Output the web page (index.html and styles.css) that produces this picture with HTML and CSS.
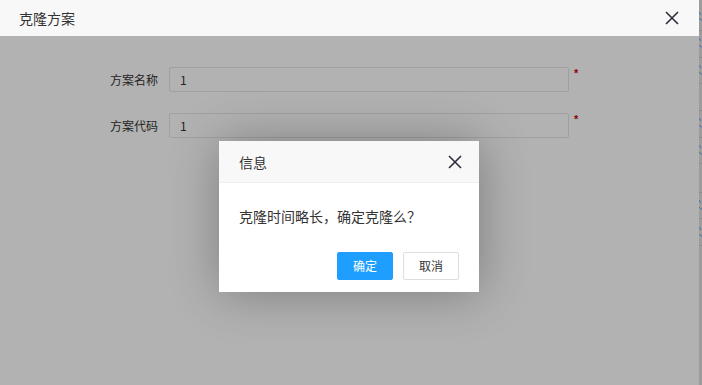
FILE: index.html
```html
<!DOCTYPE html>
<html lang="zh-CN">
<head>
<meta charset="UTF-8">
<title>克隆方案</title>
<link rel="stylesheet" href="styles.css">
</head>
<body>
<div class="layer">
    <div class="layer-title">
        <span>克隆方案</span>
        <svg class="close" width="14" height="14" viewBox="0 0 14 14"><path d="M1 1L13 13M13 1L1 13" stroke="#2e2d3c" stroke-width="1.6"/></svg>
    </div>
    <div class="layer-body">
        <form class="form">
            <div class="row">
                <label>方案名称</label>
                <input type="text" value="1">
                <span class="req">*</span>
            </div>
            <div class="row">
                <label>方案代码</label>
                <input type="text" value="1">
                <span class="req">*</span>
            </div>
        </form>
        <div class="shade"></div>
    </div>
</div>
<div class="page-edge">
    <svg width="3" height="385" viewBox="0 0 3 385">
        <rect width="3" height="385" fill="#9c9c9c"/>
        <g stroke="#8a8a8a" stroke-width="1">
            <path d="M0 30.5H3M0 57.5H3M0 83.5H3M0 110.5H3M0 137.5H3M0 163.5H3M0 192.5H3M0 218.5H3M0 245.5H3"/>
        </g>
        <g stroke="#4a72a8" stroke-width="1" fill="none">
            <path d="M0 12L2 15M0 18L2 20H3"/>
            <path d="M0 38L2 41M0 45L2 47H3"/>
            <path d="M0 65L2 68M0 72L2 74H3"/>
            <path d="M0 118L2 121M0 125L2 127H3"/>
            <path d="M0 145L2 148M0 152L2 154H3"/>
            <path d="M0 200L2 203M0 207L2 209H3"/>
            <path d="M0 227L2 230M0 234L2 236H3"/>
        </g>
    </svg>
</div>

<div class="dialog">
    <div class="dialog-title">
        <span>信息</span>
        <svg class="close" width="14" height="14" viewBox="0 0 14 14"><path d="M1 1L13 13M13 1L1 13" stroke="#2e2d3c" stroke-width="1.6"/></svg>
    </div>
    <div class="dialog-content">克隆时间略长，确定克隆么？</div>
    <div class="dialog-btns">
        <a class="btn btn-primary">确定</a>
        <a class="btn">取消</a>
    </div>
</div>
</body>
</html>
```
FILE: styles.css
```css
body {
    margin: 0;
    display: flex;
    height: 385px;
    overflow: hidden;
    font-family: "Noto Sans CJK SC", "Liberation Sans", sans-serif;
    color: #333;
}
.layer {
    width: 699px;
    display: flex;
    flex-direction: column;
    background-color: #fff;
}
.layer-title {
    height: 36px;
    flex: none;
    display: flex;
    align-items: center;
    justify-content: space-between;
    padding: 0 20px 0 19px;
    font-size: 14px;
    background-color: #f8f8f8;
}
.layer-body {
    flex: 1;
    position: relative;
}
.form {
    padding-top: 31px;
}
.row {
    display: flex;
    align-items: center;
    margin-bottom: 21px;
}
.row label {
    width: 158px;
    margin-right: 11px;
    text-align: right;
    font-size: 12px;
}
.row input {
    width: 400px;
    height: 25px;
    box-sizing: border-box;
    border: 1px solid #e6e6e6;
    border-radius: 2px;
    padding: 0 10px;
    font-size: 12px;
    font-family: inherit;
    color: #333;
}
.req {
    align-self: flex-start;
    margin-left: 5px;
    margin-top: 0;
    color: #c00;
    font-size: 11px;
    font-family: "Liberation Sans", sans-serif;
    font-weight: bold;
}
.shade {
    position: absolute;
    inset: 0;
    background-color: rgba(0, 0, 0, 0.3);
}
.page-edge {
    width: 3px;
    flex: none;
}
.page-edge svg {
    display: block;
}
.dialog {
    position: absolute;
    left: 219px;
    top: 141px;
    width: 260px;
    height: 151px;
    background-color: #fff;
    box-shadow: 1px 1px 50px rgba(0, 0, 0, 0.3);
}
.dialog-title {
    height: 41px;
    display: flex;
    align-items: center;
    justify-content: space-between;
    padding: 0 17px 0 20px;
    font-size: 14px;
    background-color: #f8f8f8;
    border-bottom: 1px solid #eee;
}
.dialog-content {
    padding: 21px 20px 20px;
    line-height: 24px;
    font-size: 14px;
}
.dialog-btns {
    display: flex;
    justify-content: flex-end;
    gap: 10px;
    padding: 4px 20px 12px;
}
.btn {
    height: 28px;
    line-height: 26px;
    box-sizing: border-box;
    padding: 0 15px;
    border: 1px solid #dedede;
    border-radius: 2px;
    background-color: #fff;
    font-size: 12px;
    color: #333;
    cursor: pointer;
}
.btn-primary {
    border-color: #1e9fff;
    background-color: #1e9fff;
    color: #fff;
}
```
